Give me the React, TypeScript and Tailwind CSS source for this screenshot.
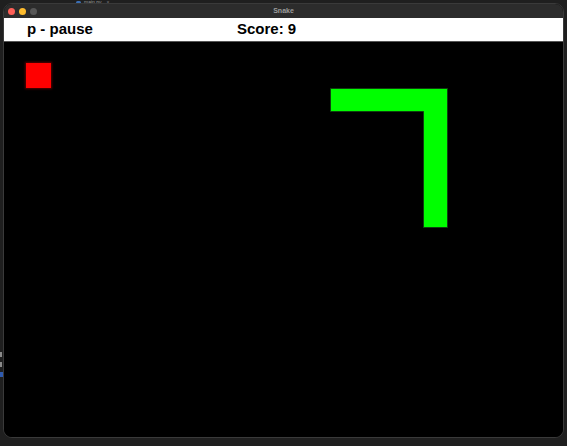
import React from 'react';

const App: React.FC = () => {
    return (
        <div className="relative w-[567px] h-[446px] overflow-hidden bg-[#1f1f1f]" style={{ fontFamily: '"Liberation Sans", Arial, sans-serif' }}>
            {/* editor behind the window */}
            <div className="absolute left-[76px] top-0 flex items-center gap-[3px] leading-none">
                <span className="w-[5px] h-[3px] rounded-sm bg-[#3b6fb6]" />
                <span className="text-[5px] leading-none text-[#9a9a9a]">main.py</span>
                <span className="text-[5px] leading-none text-[#777] ml-[2px]">×</span>
            </div>
            <div className="absolute left-0 top-[352px] w-[2px] h-[5px] bg-[#8a8a8a]" />
            <div className="absolute left-0 top-[362px] w-[2px] h-[5px] bg-[#8a8a8a]" />
            <div className="absolute left-0 top-[372px] w-[3px] h-[5px] bg-[#2f5bb0]" />

            <div className="relative ml-[3px] mt-[3px] w-[561px] h-[435px] flex flex-col rounded-[9px] overflow-hidden border border-[#3a3a3a] bg-black">
                <div className="relative h-[14px] flex items-center bg-[#2c2c2c] px-[4px] gap-[2px]">
                    <span className="w-[7px] h-[7px] rounded-full bg-[#fe5f57]" />
                    <span className="ml-[2px] w-[7px] h-[7px] rounded-full bg-[#febc2e]" />
                    <span className="ml-[2px] w-[7px] h-[7px] rounded-full bg-[#565656]" />
                    <span className="absolute inset-0 flex items-center justify-center text-[7px] font-bold text-[#9c9c9c]">Snake</span>
                </div>
                <div className="h-[24px] flex items-center bg-white text-black text-[15px] font-bold border-b border-[#555]">
                    <span className="ml-[23px] w-[210px]">p - pause</span>
                    <span>Score: 9</span>
                </div>
                <div className="relative flex-1 bg-black">
                    <div className="absolute left-[22px] top-[21px] w-[25px] h-[25px] bg-[#ff0000] shadow-[0_0_2px_1px_#5a0000]" />
                    <svg className="absolute left-0 top-0" width="559" height="395">
                        <polygon
                            points="326.5,46.5 443.5,46.5 443.5,185.5 419.5,185.5 419.5,69.5 326.5,69.5"
                            fill="#00ff00"
                            stroke="#0f400f"
                            strokeWidth="1"
                        />
                    </svg>
                </div>
            </div>
        </div>
    );
};

export default App;
